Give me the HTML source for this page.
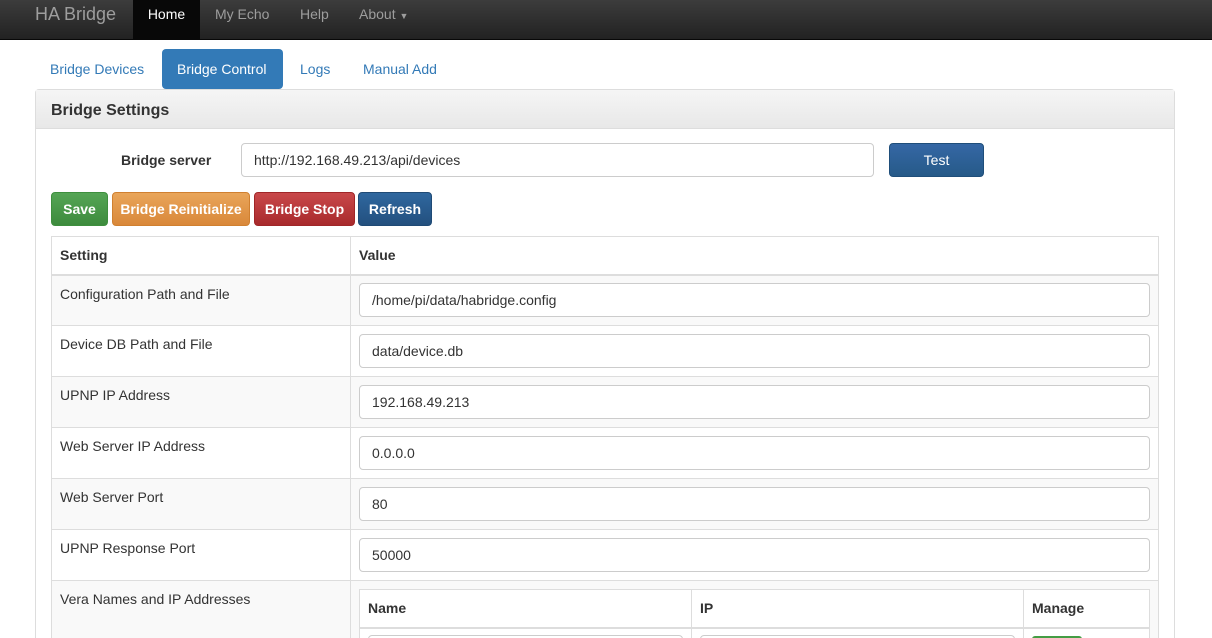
<!DOCTYPE html>
<html><head><style>
*{box-sizing:border-box;margin:0;padding:0}
html,body{width:1212px;height:638px;overflow:hidden}
body{font-family:"Liberation Sans",Arial,sans-serif;font-size:14px;color:#333;background:#fff;position:relative}
.nav{position:absolute;left:0;top:0;width:1212px;height:40px;background:linear-gradient(#3c3c3c,#222);border-bottom:1px solid #080808}
.nav span{position:absolute;top:0;height:39px;line-height:30px;color:#9d9d9d;font-size:14px}
.home{left:133px;width:67px;background:#080808;color:#fff!important;text-align:center}
.tabs a{position:absolute;top:49px;height:40px;line-height:40px;color:#337ab7;text-decoration:none;padding:0 15px}
.tabs .act{background:#337ab7;color:#fff;border-radius:4px}
.panel{position:absolute;left:35px;top:89px;width:1140px;height:560px;border:1px solid #ddd;border-radius:4px}
.ph{height:39px;background:linear-gradient(#f5f5f5,#e8e8e8);border-bottom:1px solid #ddd;padding:11px 15px;font-size:16px;font-weight:bold;color:#333;line-height:20px}
.abs{position:absolute}
.inp{position:absolute;border:1px solid #ccc;border-radius:4px;height:34px;padding:0 12px;line-height:32px;background:#fff;font-size:14px;color:#333}
.btn{position:absolute;top:192px;height:34px;line-height:32px;color:#fff;font-weight:bold;text-align:center;border-radius:4px;font-size:14px}
table{border-collapse:collapse;position:absolute}
td{border:1px solid #ddd;vertical-align:top}
</style></head><body>
<div class="nav">
<span style="left:35px;font-size:18px;line-height:29px">HA Bridge</span>
<span class="home" style="line-height:29px">Home</span>
<span style="left:215px;line-height:29px">My Echo</span>
<span style="left:300px;line-height:29px">Help</span>
<span style="left:359px;line-height:29px">About <span style="position:static;font-size:9px">▼</span></span>
</div>
<div class="tabs">
<a style="left:35px">Bridge Devices</a>
<a class="act" style="left:162px;width:121px">Bridge Control</a>
<a style="left:285px">Logs</a>
<a style="left:348px">Manual Add</a>
</div>
<div class="panel"><div class="ph">Bridge Settings</div></div>
<div class="abs" style="left:121px;top:152px;font-weight:bold">Bridge server</div>
<div class="inp" style="left:241px;top:143px;width:633px">http://192.168.49.213/api/devices</div>
<div class="btn" style="left:889px;top:143px;width:95px;background:linear-gradient(#3567a5,#265a88);border:1px solid #1f4e7a;font-weight:normal">Test</div>
<div class="btn" style="left:51px;width:57px;background:linear-gradient(#55a555,#3d8b3d);border:1px solid #3e8f3e">Save</div>
<div class="btn" style="left:112px;width:138px;background:linear-gradient(#e9a55a,#d9883a);border:1px solid #d08030">Bridge Reinitialize</div>
<div class="btn" style="left:254px;width:101px;background:linear-gradient(#c9484a,#a82a2c);border:1px solid #a02628">Bridge Stop</div>
<div class="btn" style="left:358px;width:74px;background:linear-gradient(#2f679f,#23507e);border:1px solid #1f4a75">Refresh</div>
<table style="left:51px;top:236px;width:1108px">
<tr style="height:38px;border-bottom:2px solid #ddd"><td style="width:299px;padding:10px 8px;font-weight:bold">Setting</td><td style="padding:10px 8px;font-weight:bold">Value</td></tr>
<tr style="height:51px;background:#f9f9f9"><td style="padding:10px 8px">Configuration Path and File</td><td></td></tr>
<tr style="height:51px"><td style="padding:10px 8px">Device DB Path and File</td><td></td></tr>
<tr style="height:51px;background:#f9f9f9"><td style="padding:10px 8px">UPNP IP Address</td><td></td></tr>
<tr style="height:51px"><td style="padding:10px 8px">Web Server IP Address</td><td></td></tr>
<tr style="height:51px;background:#f9f9f9"><td style="padding:10px 8px">Web Server Port</td><td></td></tr>
<tr style="height:51px"><td style="padding:10px 8px">UPNP Response Port</td><td></td></tr>
<tr style="height:80px;background:#f9f9f9"><td style="padding:10px 8px">Vera Names and IP Addresses</td><td></td></tr>
</table>
<div class="inp" style="left:359px;top:283px;width:791px">/home/pi/data/habridge.config</div>
<div class="inp" style="left:359px;top:334px;width:791px">data/device.db</div>
<div class="inp" style="left:359px;top:385px;width:791px">192.168.49.213</div>
<div class="inp" style="left:359px;top:436px;width:791px">0.0.0.0</div>
<div class="inp" style="left:359px;top:487px;width:791px">80</div>
<div class="inp" style="left:359px;top:538px;width:791px">50000</div>
<table style="left:359px;top:589px;width:791px;background:#fff">
<tr style="height:38px;border-bottom:2px solid #ddd"><td style="width:332px;padding:10px 8px;font-weight:bold">Name</td><td style="width:332px;padding:10px 8px;font-weight:bold">IP</td><td style="padding:10px 8px;font-weight:bold">Manage</td></tr>
<tr style="height:30px"><td><div style="margin:6px 8px 0;height:24px;border:1px solid #ccc;border-radius:4px"></div></td><td><div style="margin:6px 8px 0;height:24px;border:1px solid #ccc;border-radius:4px"></div></td><td><div style="margin:7px 0 0 8px;width:50px;height:20px;background:#449d44;border-radius:3px"></div></td></tr>
</table>
</body></html>
